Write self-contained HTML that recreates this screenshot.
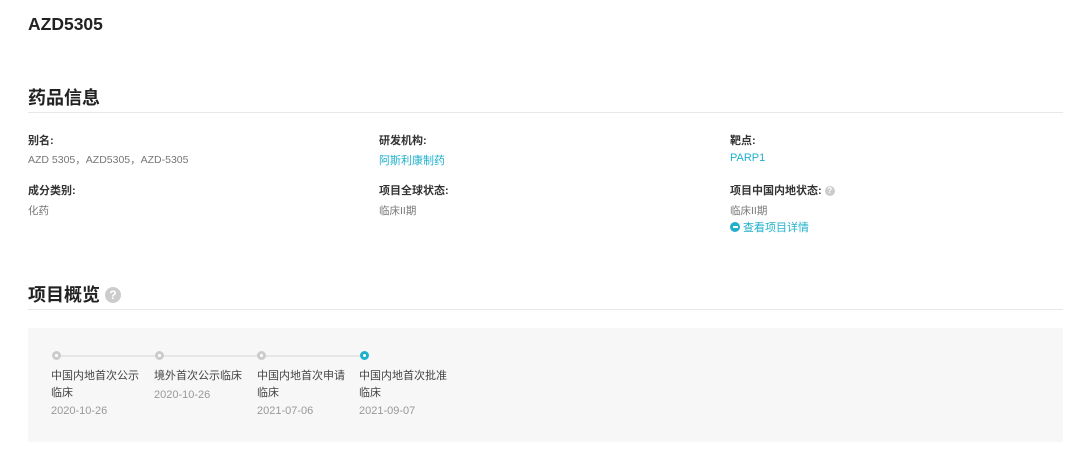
<!DOCTYPE html>
<html><head><meta charset="utf-8"><style>
body{margin:0;width:1080px;height:468px;background:#fff;font-family:"Liberation Sans","Noto Sans CJK SC",sans-serif;position:relative;overflow:hidden}
.a{position:absolute;white-space:nowrap}
.h{font-weight:bold;color:#222}
.lb{font-size:11px;font-weight:bold;color:#333}
.v{font-size:10.5px;color:#777}
.lk{font-size:11px;color:#1fb0cc}
.hr{position:absolute;left:28px;width:1035px;height:1px;background:#e8e8e8}
.dot{position:absolute;width:3px;height:3px;border:3px solid #ccc;border-radius:50%;background:#fff;top:351px}
.ln{position:absolute;height:2px;background:#e6e6e6;top:355px}
.t{font-size:11px;color:#444;line-height:17px}
.d{font-size:11px;color:#999}
</style></head><body>
<div class="a h" style="left:28px;top:14px;font-size:17.5px">AZD5305</div>
<div class="a h" style="left:28px;top:84px;font-size:18px">药品信息</div>
<div class="hr" style="top:112px"></div>
<div class="a lb" style="left:28px;top:132px">别名:</div>
<div class="a v" style="left:28px;top:152px">AZD 5305，AZD5305，AZD-5305</div>
<div class="a lb" style="left:28px;top:182px">成分类别:</div>
<div class="a v" style="left:28px;top:203px">化药</div>
<div class="a lb" style="left:379px;top:132px">研发机构:</div>
<div class="a lk" style="left:379px;top:152px">阿斯利康制药</div>
<div class="a lb" style="left:379px;top:182px">项目全球状态:</div>
<div class="a v" style="left:379px;top:203px">临床II期</div>
<div class="a lb" style="left:730px;top:132px">靶点:</div>
<div class="a lk" style="left:730px;top:152px">PARP1</div>
<div class="a lb" style="left:730px;top:182px">项目中国内地状态: <span style="display:inline-block;width:10px;height:10px;border-radius:50%;background:#ccc;color:#fff;font-size:8px;text-align:center;line-height:10px;vertical-align:1px">?</span></div>
<div class="a v" style="left:730px;top:203px">临床II期</div>
<div class="a lk" style="left:730px;top:219px"><span style="display:inline-block;width:10px;height:10px;border-radius:50%;background:#1fb0cc;vertical-align:-1px;position:relative"><span style="position:absolute;left:3px;top:4px;width:5px;height:2px;background:#fff"></span></span> 查看项目详情</div>
<div class="a h" style="left:28px;top:281px;font-size:18px">项目概览 <span style="display:inline-block;width:16px;height:16px;border-radius:50%;background:#ccc;color:#fff;font-size:12px;text-align:center;line-height:16px;vertical-align:2px">?</span></div>
<div class="hr" style="top:309px"></div>
<div style="position:absolute;left:28px;top:328px;width:1035px;height:114px;background:#f7f7f7"></div>
<div class="ln" style="left:60px;width:300px"></div>
<div class="dot" style="left:52px"></div>
<div class="dot" style="left:155px"></div>
<div class="dot" style="left:257px"></div>
<div class="dot" style="left:360px;border-color:#1fb0cc"></div>
<div class="a t" style="left:51px;top:368px">中国内地首次公示<br>临床</div>
<div class="a d" style="left:51px;top:405px">2020-10-26</div>
<div class="a t" style="left:154px;top:368px">境外首次公示临床</div>
<div class="a d" style="left:154px;top:389px">2020-10-26</div>
<div class="a t" style="left:257px;top:368px">中国内地首次申请<br>临床</div>
<div class="a d" style="left:257px;top:405px">2021-07-06</div>
<div class="a t" style="left:359px;top:368px">中国内地首次批准<br>临床</div>
<div class="a d" style="left:359px;top:405px">2021-09-07</div>
</body></html>
